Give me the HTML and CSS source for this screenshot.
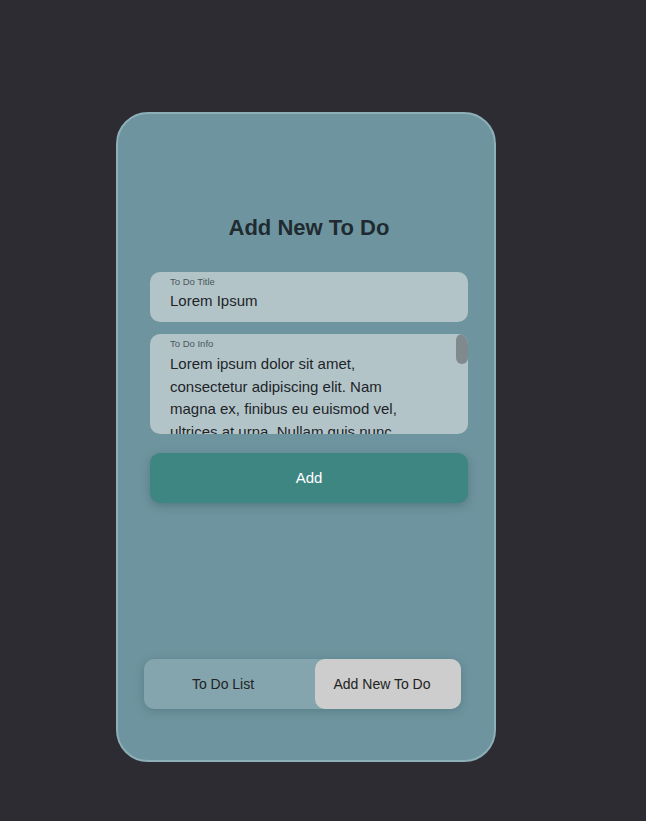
FILE: index.html
```html
<!DOCTYPE html>
<html>
<head>
<meta charset="utf-8">
<link rel="stylesheet" href="styles.css">
</head>
<body>
<div class="stage">
  <div class="card">
    <h1 class="title">Add New To Do</h1>
    <div class="field">
      <div class="label">To Do Title</div>
      <div class="value">Lorem Ipsum</div>
    </div>
    <div class="field area">
      <div class="label">To Do Info</div>
      <div class="area-text">Lorem ipsum dolor sit amet, consectetur adipiscing elit. Nam magna ex, finibus eu euismod vel, ultrices at urna. Nullam quis nunc</div>
      <div class="thumb"></div>
    </div>
    <button class="add">Add</button>
    <div class="tabs">
      <div class="tab">To Do List</div>
      <div class="tab active">Add New To Do</div>
    </div>
  </div>
</div>
</body>
</html>
```
FILE: styles.css
```css
html, body {
  margin: 0;
  padding: 0;
  background: #2d2c32;
  font-family: "Liberation Sans", Arial, sans-serif;
}
.stage {
  padding: 112px 0 0 116px;
  height: 821px;
  box-sizing: border-box;
}
.card {
  width: 380px;
  height: 650px;
  box-sizing: border-box;
  border: 2px solid #8cafb8;
  border-radius: 32px;
  background: #6e959f;
  padding: 101px 26px 0 32px;
  display: flex;
  flex-direction: column;
}
.title {
  margin: 0;
  font-size: 22px;
  line-height: 26px;
  font-weight: bold;
  text-align: center;
  color: #1f2b31;
  width: 318px;
}
.field {
  margin-top: 31px;
  width: 318px;
  height: 50px;
  box-sizing: border-box;
  background: #b3c4c9;
  border-radius: 10px;
  padding: 4px 20px 0 20px;
  position: relative;
  overflow: hidden;
}
.label {
  font-size: 9.5px;
  line-height: 11px;
  color: #4a565b;
}
.value {
  font-size: 15px;
  line-height: 20px;
  color: #1d2428;
  margin-top: 4px;
}
.field.area {
  margin-top: 12px;
  height: 100px;
  padding-top: 4px;
}
.area-text {
  width: 250px;
  font-size: 15px;
  line-height: 22.5px;
  color: #1d2428;
  margin-top: 4px;
}
.thumb {
  position: absolute;
  right: 0;
  top: 0;
  width: 12px;
  height: 30px;
  border-radius: 6px;
  background: #7f898e;
}
.add {
  margin-top: 19px;
  width: 318px;
  height: 50px;
  padding: 0 0 2px 0;
  border: none;
  border-radius: 10px;
  background: #3e8682;
  color: #fff;
  font-family: "Liberation Sans", Arial, sans-serif;
  font-size: 15px;
  box-shadow: 0 3px 10px rgba(40, 70, 80, 0.35);
}
.tabs {
  margin-top: auto;
  margin-bottom: 51px;
  margin-left: -6px;
  width: 317px;
  height: 50px;
  display: flex;
  background: #84a5ad;
  border-radius: 10px;
  box-shadow: 0 2px 10px rgba(40, 70, 80, 0.3);
}
.tab {
  width: 171px;
  box-sizing: border-box;
  padding-right: 13px;
  display: flex;
  align-items: center;
  justify-content: center;
  font-size: 14px;
  color: #222;
}
.tab.active {
  width: 146px;
  padding-right: 12px;
  background: #cdcdcd;
  border-radius: 10px;
}
```
